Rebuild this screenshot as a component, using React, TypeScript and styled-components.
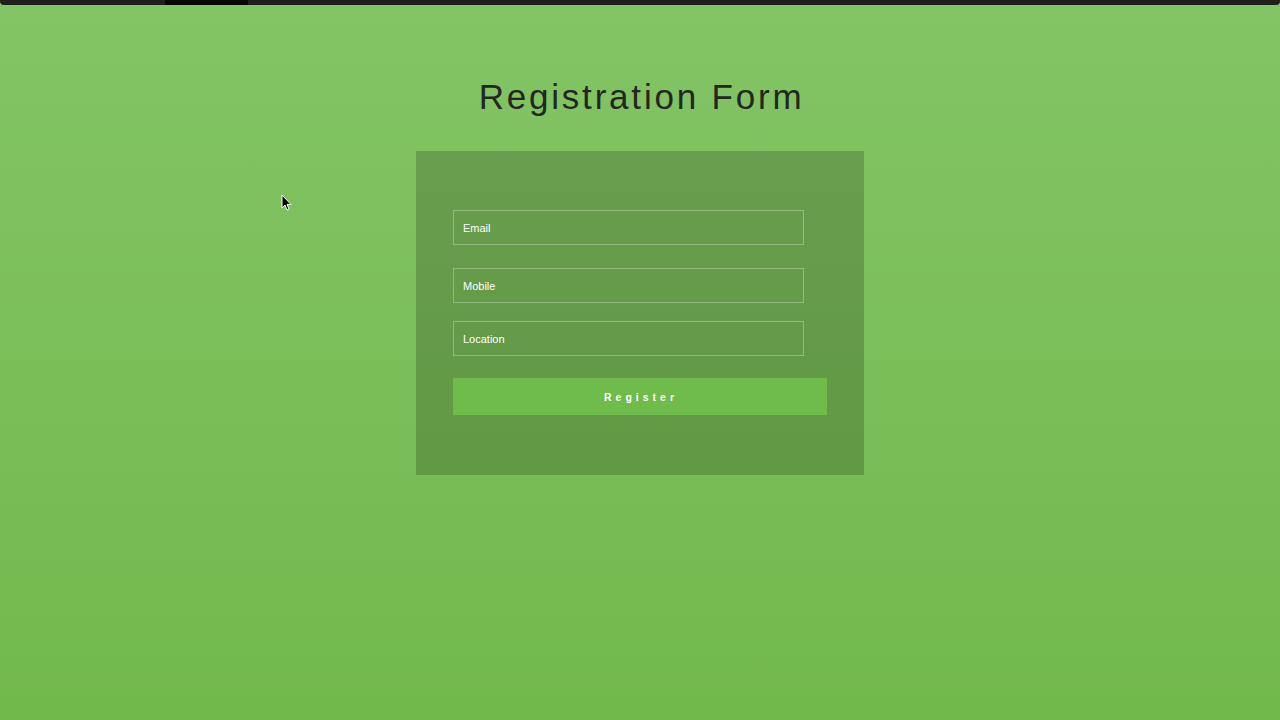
import React from 'react';
import styled, { createGlobalStyle } from 'styled-components';

const GlobalStyle = createGlobalStyle`
  html, body {
    margin: 0;
    padding: 0;
  }
  body {
    font-family: "Liberation Sans", Arial, sans-serif;
    background: linear-gradient(to bottom, #83c465 0%, #72b94c 100%);
    min-height: 100vh;
  }
`;

const Page = styled.div`
  position: relative;
  min-height: 720px;
  display: flex;
  flex-direction: column;
`;

const TopBar = styled.div`
  height: 5px;
  background: #1f1f1f;
  border-radius: 0 0 4px 4px;
  display: flex;
  padding-left: 165px;
`;

const ActiveTab = styled.div`
  width: 83px;
  height: 5px;
  background: #060606;
`;

const Main = styled.main`
  display: flex;
  flex-direction: column;
  align-items: center;
  padding-top: 72px;
`;

const Title = styled.h1`
  margin: 0 0 34px;
  font-size: 35px;
  font-weight: 400;
  line-height: 40px;
  letter-spacing: 2.8px;
  color: #232623;
  padding-left: 3px;
`;

const Card = styled.form`
  width: 448px;
  height: 324px;
  box-sizing: border-box;
  padding: 59px 37px 0;
  background: linear-gradient(to bottom, #689d4d 0%, #619944 100%);
  display: flex;
  flex-direction: column;
`;

const Field = styled.input<{ $gap: number }>`
  width: 351px;
  height: 35px;
  box-sizing: border-box;
  margin: 0 0 ${(p) => p.$gap}px;
  padding: 0 9px;
  background: transparent;
  border: 1px solid rgba(255, 255, 255, 0.3);
  color: #fff;
  font-family: "Liberation Sans", Arial, sans-serif;
  font-size: 11px;
  outline: none;

  &::placeholder {
    color: #fff;
    opacity: 1;
  }
`;

const Button = styled.button`
  width: 374px;
  height: 37px;
  border: none;
  background: #6fbb4b;
  color: #fff;
  font-family: "Liberation Sans", Arial, sans-serif;
  font-size: 10.5px;
  font-weight: 700;
  letter-spacing: 4px;
  cursor: pointer;
  padding-left: 8px;
`;

const Cursor = styled.svg`
  position: absolute;
  left: 281px;
  top: 194px;
`;

export default function App() {
  return (
    <Page>
      <GlobalStyle />
      <TopBar>
        <ActiveTab />
      </TopBar>
      <Main>
        <Title>Registration Form</Title>
        <Card onSubmit={(e) => e.preventDefault()}>
          <Field $gap={23} type="email" placeholder="Email" />
          <Field $gap={18} type="tel" placeholder="Mobile" />
          <Field $gap={22} type="text" placeholder="Location" />
          <Button type="submit">Register</Button>
        </Card>
      </Main>
      <Cursor width="11" height="17" viewBox="0 0 11 17">
        <path d="M1 1 L1 14 L4 11 L6 16 L8 15 L6 10.5 L10 10.5 Z" fill="#000" stroke="#fff" strokeWidth="1" />
      </Cursor>
    </Page>
  );
}
